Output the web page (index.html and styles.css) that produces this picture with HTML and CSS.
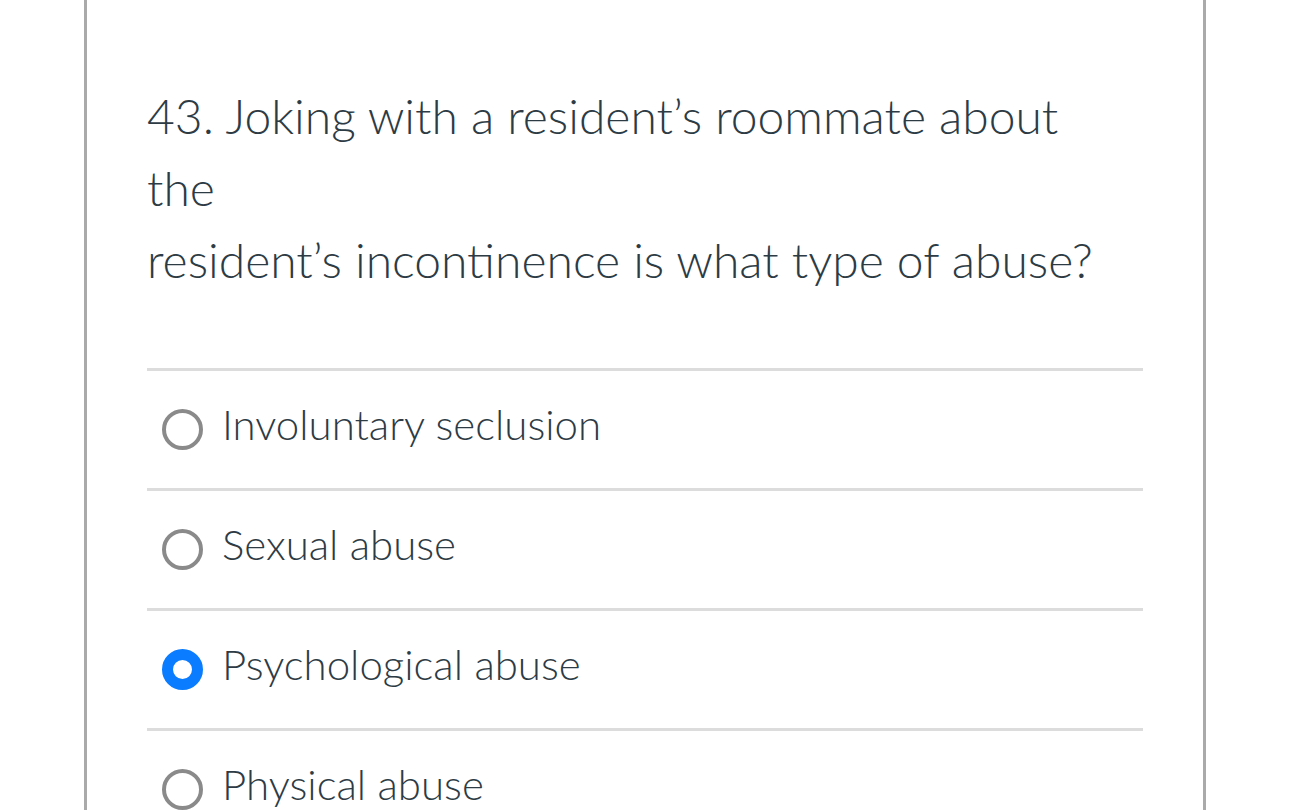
FILE: index.html
```html
<!DOCTYPE html>
<html lang="en">
<head>
<meta charset="utf-8">
<title>Quiz question 43</title>
<link rel="stylesheet" href="styles.css">
</head>
<body>
<div class="page">
  <div class="card">
    <p class="question">43. Joking with a resident’s roommate about<br>the<br>resident’s incontinence is what type of abuse?</p>
    <ul class="answers">
      <li class="answer">
        <span class="radio"></span>
        <span class="label">Involuntary seclusion</span>
      </li>
      <li class="answer">
        <span class="radio"></span>
        <span class="label">Sexual abuse</span>
      </li>
      <li class="answer">
        <span class="radio radio--checked"></span>
        <span class="label">Psychological abuse</span>
      </li>
      <li class="answer">
        <span class="radio"></span>
        <span class="label">Physical abuse</span>
      </li>
    </ul>
  </div>
</div>
</body>
</html>
```
FILE: styles.css
```css
html, body {
  margin: 0;
  padding: 0;
  background: #ffffff;
}

body {
  font-family: Lato, "Noto Sans", sans-serif;
  color: #2d3b45;
  overflow: hidden;
  height: 810px;
}

.page {
  padding-left: 84px;
  width: 1122px;
}

.card {
  border-left: 3px solid #aaaaaa;
  border-right: 3px solid #aaaaaa;
  padding: 80px 60px 0 60px;
  min-height: 900px;
}

.question {
  margin: 0;
  font-size: 48px;
  line-height: 72px;
  font-weight: 300;
}

.answers {
  list-style: none;
  margin: 72px 0 0 0;
  padding: 0;
}

.answer {
  display: flex;
  align-items: center;
  gap: 19px;
  height: 117px;
  border-top: 3px solid #dcdcdc;
  padding-left: 15px;
}

.radio {
  flex: none;
  box-sizing: border-box;
  width: 41px;
  height: 41px;
  border-radius: 50%;
  border: 4px solid #8a8a8a;
  background: #ffffff;
}

.radio--checked {
  border: 11px solid #0a7cff;
}

.label {
  font-size: 42px;
  line-height: 50px;
  font-weight: 300;
  padding-bottom: 12px;
}
```
